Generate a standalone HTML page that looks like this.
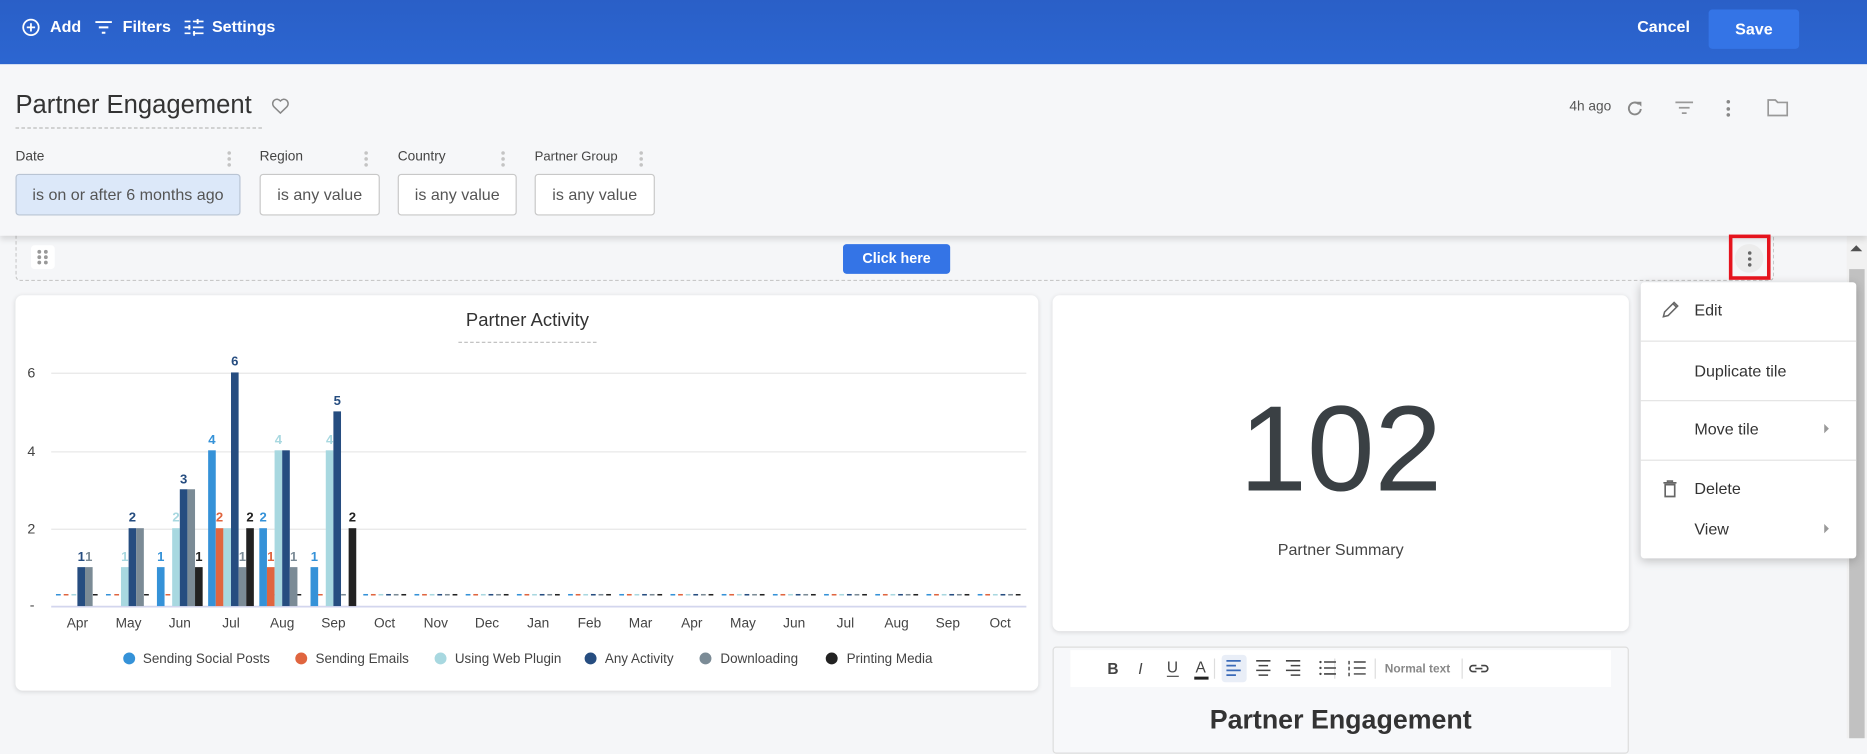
<!DOCTYPE html>
<html><head><meta charset="utf-8"><style>
*{box-sizing:border-box;margin:0;padding:0}
html,body{width:1867px;height:738px;overflow:hidden;background:#f5f6f8;font-family:"Liberation Sans",sans-serif;color:#333}
#w{position:absolute;left:0;top:0;width:1568px;height:620px;transform:scale(1.19069);transform-origin:0 0}
.a{position:absolute;white-space:nowrap}
.hdr{left:0;top:0;width:1568px;height:54px;background:linear-gradient(#2a5fc7,#2c66d1)}
.ht{color:#fff;font-weight:bold;font-size:13.5px;top:15px}
.sub{left:0;top:54px;width:1568px;height:144px;background:#f6f7f9;box-shadow:0 3px 5px rgba(0,0,0,.12);z-index:3}
.lbl{font-size:11.5px;color:#444;top:126px}
.dots{width:3px;top:127px}
.dots i{display:block;width:3px;height:3px;border-radius:50%;background:#c4c4c4;margin-bottom:2px}
.fb{top:146px;height:35px;border:1px solid #c8c8c8;border-radius:3px;background:#fff;font-size:13.5px;color:#555;text-align:center;line-height:33px}
.card{background:#fff;border-radius:6px;box-shadow:0 1px 4px rgba(0,0,0,.12)}
.mi{left:1423px;font-size:13.5px;color:#333}
.sep{height:1px;background:#e3e3e3;left:1378px;width:181px}
</style></head><body><div id="w">
<div class="a hdr"></div>
<svg class="a" style="left:18px;top:15px" width="16" height="16" viewBox="0 0 16 16"><circle cx="8" cy="8" r="6.5" fill="none" stroke="#fff" stroke-width="1.5"/><path d="M8 4.5v7M4.5 8h7" stroke="#fff" stroke-width="1.5"/></svg>
<div class="a ht" style="left:42px">Add</div>
<svg class="a" style="left:80px;top:17px" width="14" height="12" viewBox="0 0 14 12"><path d="M0 1.5h14M3 6h8M5.5 10.5h3" stroke="#fff" stroke-width="1.6"/></svg>
<div class="a ht" style="left:103px">Filters</div>
<svg class="a" style="left:155px;top:15px" width="16" height="16" viewBox="0 0 16 16"><path d="M0 3h16M0 8h16M0 13h16" stroke="#fff" stroke-width="1.4" stroke-dasharray="5 2 9"/><path d="M11 1v4M4 6v4M8 11v4" stroke="#fff" stroke-width="1.6"/></svg>
<div class="a ht" style="left:178px">Settings</div>
<div class="a ht" style="left:1375px">Cancel</div>
<div class="a" style="left:1435px;top:8px;width:76px;height:33px;background:#3474e6;border-radius:3px;color:#fff;font-weight:bold;font-size:13.5px;text-align:center;line-height:33px">Save</div>

<div class="a sub"></div>
<div class="a" style="z-index:4;left:0;top:0">
<div class="a" style="left:13px;top:76px;font-size:21.5px;color:#333">Partner Engagement</div>
<div class="a" style="left:13px;top:107px;width:207px;border-top:1px dashed #bbb"></div>
<svg class="a" style="left:228px;top:82px" width="15" height="14" viewBox="0 0 24 22"><path d="M12 20.5 3.5 12.3C1 9.8 1 5.8 3.5 3.5s6-2 8.5.8c2.5-2.8 6-3.1 8.5-.8s2.5 6.3 0 8.8z" fill="none" stroke="#888" stroke-width="2"/></svg>
<div class="a" style="left:1318px;top:84px;font-size:11.5px;color:#555">4h ago</div>
<svg class="a" style="left:1365px;top:83px" width="16" height="16" viewBox="0 0 16 16"><path d="M13 8.5A5 5 0 1 1 11.5 4.5" fill="none" stroke="#888" stroke-width="1.6"/><path d="M9.5 2.5h4v4z" fill="#888"/></svg>
<svg class="a" style="left:1407px;top:85px" width="15" height="12" viewBox="0 0 15 12"><path d="M0 1h15M3 5.5h9M5.5 10h4" stroke="#999" stroke-width="1.5"/></svg>
<div class="a" style="left:1450px;top:84px"><div style="width:3px;height:3px;background:#888;border-radius:50%;margin-bottom:2.5px"></div><div style="width:3px;height:3px;background:#888;border-radius:50%;margin-bottom:2.5px"></div><div style="width:3px;height:3px;background:#888;border-radius:50%"></div></div>
<svg class="a" style="left:1484px;top:83px" width="18" height="15" viewBox="0 0 18 15"><path d="M1 1h6l2 2h8v11H1z" fill="none" stroke="#999" stroke-width="1.4"/></svg>

<div class="a lbl" style="left:13px">Date</div><div class="a dots" style="left:191px"><i></i><i></i><i></i></div>
<div class="a lbl" style="left:218px">Region</div><div class="a dots" style="left:306px"><i></i><i></i><i></i></div>
<div class="a lbl" style="left:334px">Country</div><div class="a dots" style="left:421px"><i></i><i></i><i></i></div>
<div class="a lbl" style="left:449px;font-size:11px">Partner Group</div><div class="a dots" style="left:537px"><i></i><i></i><i></i></div>
<div class="a fb" style="left:13px;width:189px;background:#dce8f9;border-color:#b9c4d3">is on or after 6 months ago</div>
<div class="a fb" style="left:218px;width:101px">is any value</div>
<div class="a fb" style="left:334px;width:100px">is any value</div>
<div class="a fb" style="left:449px;width:101px">is any value</div>
</div>

<div class="a" style="left:13px;top:190px;width:1477px;height:46px;border:1px dashed #c8c8c8;border-top:none;border-radius:0 0 4px 4px"></div>
<div class="a" style="left:26px;top:206px;width:20px;height:20px;background:#fff;border-radius:3px"></div>
<svg class="a" style="left:30px;top:209px" width="12" height="14"><g fill="#999"><circle cx="3" cy="2.5" r="1.6"/><circle cx="8.5" cy="2.5" r="1.6"/><circle cx="3" cy="7" r="1.6"/><circle cx="8.5" cy="7" r="1.6"/><circle cx="3" cy="11.5" r="1.6"/><circle cx="8.5" cy="11.5" r="1.6"/></g></svg>
<div class="a" style="left:708px;top:205px;width:90px;height:25px;background:#3474e6;border-radius:3px;color:#fff;font-size:12px;font-weight:bold;text-align:center;line-height:25px">Click here</div>
<div class="a" style="left:1457px;top:205px;width:24px;height:24px;border-radius:50%;background:#ececec"></div>
<div class="a" style="left:1467.5px;top:211px"><div style="width:3px;height:3px;background:#666;border-radius:50%;margin-bottom:2px"></div><div style="width:3px;height:3px;background:#666;border-radius:50%;margin-bottom:2px"></div><div style="width:3px;height:3px;background:#666;border-radius:50%"></div></div>
<div class="a" style="left:1452px;top:197px;width:35px;height:38px;border:3px solid #e5131d;z-index:5"></div>

<div class="a" style="left:1551px;top:198px;width:17px;height:422px;background:#f1f1f1"></div>
<div class="a" style="left:1553px;top:226px;width:13px;height:394px;background:#c1c1c1"></div>
<svg class="a" style="left:1554px;top:205px" width="10" height="7"><path d="M0 6 5 1 10 6z" fill="#505050"/></svg>

<div class="a card" style="left:13px;top:248px;width:859px;height:332px"></div>
<div class="a" style="left:343px;top:261px;width:200px;text-align:center;font-size:15.5px;color:#333">Partner Activity</div>
<div class="a" style="left:385px;top:287px;width:116px;border-top:1px dashed #bbb"></div>
<svg class="a" style="left:0;top:0" width="880" height="600">
<g stroke="#e8e8e8" stroke-width="1"><path d="M43 313.5H862M43 379.5H862M43 444.5H862"/></g>
<path d="M43 509.5H862" stroke="#d3d6ee" stroke-width="1.5"/>
<g font-size="12" fill="#444" font-family="Liberation Sans,sans-serif"><text x="23" y="317">6</text><text x="23" y="383">4</text><text x="23" y="448">2</text><text x="25" y="512">-</text></g>
<defs><g id="z"><path d="M1.3 499.5h4" stroke="#3592d8" stroke-width="1.3"/><path d="M7.7 499.5h4" stroke="#e0653f" stroke-width="1.3"/><path d="M14.1 499.5h4" stroke="#a8d8e0" stroke-width="1.3"/><path d="M20.5 499.5h4" stroke="#264d80" stroke-width="1.3"/><path d="M26.9 499.5h4" stroke="#7b8b96" stroke-width="1.3"/><path d="M33.3 499.5h4" stroke="#222" stroke-width="1.3"/></g></defs>
<use href="#z" x="303.8"/><use href="#z" x="346.8"/><use href="#z" x="389.8"/><use href="#z" x="432.8"/><use href="#z" x="475.8"/><use href="#z" x="518.8"/><use href="#z" x="561.8"/><use href="#z" x="604.8"/><use href="#z" x="647.8"/><use href="#z" x="690.8"/><use href="#z" x="733.8"/><use href="#z" x="776.8"/><use href="#z" x="819.8"/>
<g stroke-width="1.3">
<path d="M47 499.5h4M89 499.5h4M228 499.5h4" stroke="#3592d8"/><path d="M53.5 499.5h4M96 499.5h4M139 499.5h4M267 499.5h4" stroke="#e0653f"/><path d="M60 499.5h4" stroke="#a8d8e0"/>
<path d="M78 499.5h4M121 499.5h4M249 499.5h4" stroke="#222"/><path d="M286.5 499.5h4" stroke="#7b8b96"/>
</g>
<g>
<rect x="65" y="476.3" width="6.4" height="32.7" fill="#264d80"/><rect x="71.4" y="476.3" width="6.4" height="32.7" fill="#7b8b96"/>
<rect x="101.6" y="476.3" width="6.4" height="32.7" fill="#a8d8e0"/><rect x="108" y="443.6" width="6.4" height="65.4" fill="#264d80"/><rect x="114.4" y="443.6" width="6.4" height="65.4" fill="#7b8b96"/>
<rect x="131.8" y="476.3" width="6.4" height="32.7" fill="#3592d8"/><rect x="144.6" y="443.6" width="6.4" height="65.4" fill="#a8d8e0"/><rect x="151" y="410.9" width="6.4" height="98.1" fill="#264d80"/><rect x="157.4" y="410.9" width="6.4" height="98.1" fill="#7b8b96"/><rect x="163.8" y="476.3" width="6.4" height="32.7" fill="#222"/>
<rect x="174.8" y="378.2" width="6.4" height="130.8" fill="#3592d8"/><rect x="181.2" y="443.6" width="6.4" height="65.4" fill="#e0653f"/><rect x="187.6" y="443.6" width="6.4" height="65.4" fill="#a8d8e0"/><rect x="194" y="312.8" width="6.4" height="196.2" fill="#264d80"/><rect x="200.4" y="476.3" width="6.4" height="32.7" fill="#7b8b96"/><rect x="206.8" y="443.6" width="6.4" height="65.4" fill="#222"/>
<rect x="217.8" y="443.6" width="6.4" height="65.4" fill="#3592d8"/><rect x="224.2" y="476.3" width="6.4" height="32.7" fill="#e0653f"/><rect x="230.6" y="378.2" width="6.4" height="130.8" fill="#a8d8e0"/><rect x="237" y="378.2" width="6.4" height="130.8" fill="#264d80"/><rect x="243.4" y="476.3" width="6.4" height="32.7" fill="#7b8b96"/>
<rect x="260.8" y="476.3" width="6.4" height="32.7" fill="#3592d8"/><rect x="273.6" y="378.2" width="6.4" height="130.8" fill="#a8d8e0"/><rect x="280" y="345.5" width="6.4" height="163.5" fill="#264d80"/><rect x="292.8" y="443.6" width="6.4" height="65.4" fill="#222"/>
</g>
<g font-size="11" font-weight="bold" text-anchor="middle" font-family="Liberation Sans,sans-serif">
<text x="68.2" y="471" fill="#264d80">1</text><text x="74.6" y="471" fill="#7b8b96">1</text>
<text x="104.8" y="471" fill="#a8d8e0">1</text><text x="111.2" y="438" fill="#264d80">2</text>
<text x="135" y="471" fill="#3592d8">1</text><text x="147.8" y="438" fill="#a8d8e0">2</text><text x="154.2" y="406" fill="#264d80">3</text><text x="167" y="471" fill="#222">1</text>
<text x="178" y="373" fill="#3592d8">4</text><text x="184.4" y="438" fill="#e0653f">2</text><text x="197.2" y="307" fill="#264d80">6</text><text x="203.6" y="471" fill="#7b8b96">1</text><text x="210" y="438" fill="#222">2</text>
<text x="221" y="438" fill="#3592d8">2</text><text x="227.4" y="471" fill="#e0653f">1</text><text x="233.8" y="373" fill="#a8d8e0">4</text><text x="246.6" y="471" fill="#7b8b96">1</text>
<text x="264" y="471" fill="#3592d8">1</text><text x="276.8" y="373" fill="#a8d8e0">4</text><text x="283.2" y="340" fill="#264d80">5</text><text x="296" y="438" fill="#222">2</text>
</g>
<g font-size="11.5" fill="#444" text-anchor="middle" font-family="Liberation Sans,sans-serif">
<text x="65" y="527">Apr</text><text x="108" y="527">May</text><text x="151" y="527">Jun</text><text x="194" y="527">Jul</text><text x="237" y="527">Aug</text><text x="280" y="527">Sep</text><text x="323" y="527">Oct</text><text x="366" y="527">Nov</text><text x="409" y="527">Dec</text><text x="452" y="527">Jan</text><text x="495" y="527">Feb</text><text x="538" y="527">Mar</text><text x="581" y="527">Apr</text><text x="624" y="527">May</text><text x="667" y="527">Jun</text><text x="710" y="527">Jul</text><text x="753" y="527">Aug</text><text x="796" y="527">Sep</text><text x="840" y="527">Oct</text>
</g>
<g font-size="11.3" fill="#444" font-family="Liberation Sans,sans-serif">
<circle cx="108.5" cy="553" r="5" fill="#3592d8"/><text x="120" y="557">Sending Social Posts</text>
<circle cx="253" cy="553" r="5" fill="#e0653f"/><text x="265" y="557">Sending Emails</text>
<circle cx="370" cy="553" r="5" fill="#a8d8e0"/><text x="382" y="557">Using Web Plugin</text>
<circle cx="496" cy="553" r="5" fill="#264d80"/><text x="508" y="557">Any Activity</text>
<circle cx="592.5" cy="553" r="5" fill="#7b8b96"/><text x="605" y="557">Downloading</text>
<circle cx="698.5" cy="553" r="5" fill="#222"/><text x="711" y="557">Printing Media</text>
</g>
</svg>

<div class="a card" style="left:884px;top:248px;width:484px;height:282px"></div>
<div class="a" style="left:884px;top:322px;width:484px;text-align:center;font-size:102px;line-height:110px;color:#3a4044">102</div>
<div class="a" style="left:884px;top:454px;width:484px;text-align:center;font-size:13.5px;color:#444">Partner Summary</div>

<div class="a" style="left:884px;top:543px;width:484px;height:90px;background:#f7f8fa;border:1px solid #ddd;border-radius:3px"></div>
<div class="a" style="left:899px;top:546px;width:454px;height:31px;background:#fff"></div>
<svg class="a" style="left:899px;top:546px" width="454" height="31" font-family="Liberation Sans,sans-serif">
<text x="31" y="20" font-size="13" font-weight="bold" fill="#444">B</text>
<text x="57" y="20" font-size="13" font-style="italic" fill="#444">I</text>
<text x="81" y="19" font-size="13" fill="#444">U</text><path d="M81 22h10" stroke="#444"/>
<text x="105" y="19" font-size="13" fill="#444">A</text><path d="M104 23.5h12" stroke="#222" stroke-width="2.5"/>
<path d="M121 7v17M222 7v17M256 7v17M329 7v17" stroke="#ddd"/>
<rect x="127" y="4" width="21" height="23" rx="3" fill="#e9eef7"/>
<path d="M131 9h12M131 13h8M131 17h12M131 21h8" stroke="#3a6ab8" stroke-width="1.5"/>
<path d="M156 9h12M158 13h8M156 17h12M158 21h8" stroke="#444" stroke-width="1.3"/>
<path d="M181 9h12M185 13h8M181 17h12M185 21h8" stroke="#444" stroke-width="1.3"/>
<path d="M213 10h10M213 15h10M213 20h10" stroke="#444" stroke-width="1.3"/><g fill="#444"><circle cx="210" cy="10" r="1"/><circle cx="210" cy="15" r="1"/><circle cx="210" cy="20" r="1"/></g>
<path d="M238 10h10M238 15h10M238 20h10M234 9v3M234 14v3M234 19v3" stroke="#444" stroke-width="1.2"/>
<text x="264" y="19" font-size="10" font-weight="bold" fill="#888">Normal text</text>
<path d="M341 13h-3a2.5 2.5 0 0 0 0 5h3M345 13h3a2.5 2.5 0 0 1 0 5h-3M340 15.5h6" fill="none" stroke="#444" stroke-width="1.4"/>
</svg>
<div class="a" style="left:884px;top:592px;width:484px;text-align:center;font-size:22.5px;font-weight:bold;color:#333">Partner Engagement</div>

<div class="a" style="left:1378px;top:237px;width:181px;height:232px;background:#fff;border-radius:3px;box-shadow:0 2px 8px rgba(0,0,0,.22)"></div>
<svg class="a" style="left:1395px;top:252px" width="16" height="16" viewBox="0 0 16 16"><path d="M2 14l1-4 8-8 3 3-8 8z M10 3l3 3" fill="none" stroke="#666" stroke-width="1.3"/></svg>
<div class="a mi" style="top:253px">Edit</div>
<div class="a sep" style="top:286px"></div>
<div class="a mi" style="top:304px">Duplicate tile</div>
<div class="a sep" style="top:336px"></div>
<div class="a mi" style="top:353px">Move tile</div>
<svg class="a" style="left:1532px;top:356px" width="5" height="8"><path d="M0 0l4 4-4 4z" fill="#999"/></svg>
<div class="a sep" style="top:386px"></div>
<svg class="a" style="left:1396px;top:403px" width="13" height="15" viewBox="0 0 13 15"><path d="M1 2.5h11M4.5 2.5V1h4v1.5M2.5 4h8v10h-8z" fill="none" stroke="#666" stroke-width="1.4"/></svg>
<div class="a mi" style="top:403px">Delete</div>
<div class="a mi" style="top:437px">View</div>
<svg class="a" style="left:1532px;top:440px" width="5" height="8"><path d="M0 0l4 4-4 4z" fill="#999"/></svg>
</div></body></html>
